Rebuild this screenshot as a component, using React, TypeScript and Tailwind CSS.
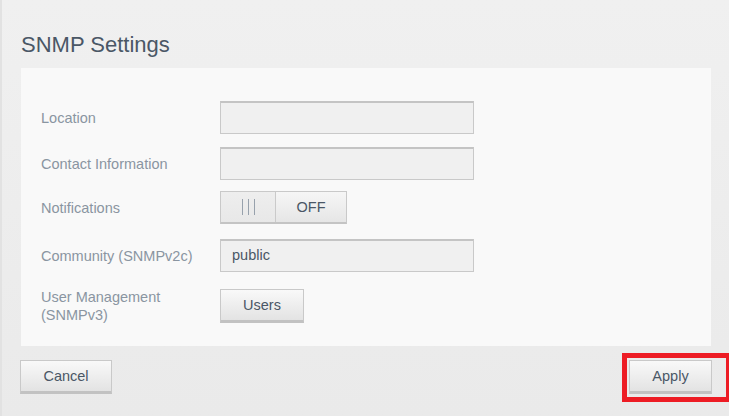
import React from "react";

const font = { fontFamily: '"Liberation Sans", Arial, sans-serif' };

function Field({ value = "" }: { value?: string }) {
  return (
    <div className="w-[254px] h-[33px] bg-[#f0f0f0] border border-[#c9c9c9] border-t-2 border-t-[#c4c4c4] flex items-center pl-[11px] text-[14.5px] text-[#4a5766]">
      {value}
    </div>
  );
}

function Btn({ children, w }: { children: React.ReactNode; w: string }) {
  return (
    <button
      className={`${w} h-[34px] pt-[2px] bg-gradient-to-b from-[#f9f9f9] to-[#e3e3e3] border border-[#c9c9c9] border-b-[3px] border-b-[#c2c2c2] text-[14.5px] text-[#4a5766] flex items-center justify-center`}
    >
      {children}
    </button>
  );
}

function Row({ label, children, className = "" }: { label: string; children: React.ReactNode; className?: string }) {
  return (
    <div className={`flex items-center ${className}`}>
      <div className="w-[179px] pr-[20px] text-[14.5px] leading-[18px] text-[#8a95a1]">{label}</div>
      {children}
    </div>
  );
}

export default function App() {
  return (
    <div
      className="w-[729px] h-[416px] bg-gradient-to-b from-[#f0f0f0] to-[#eaeaea] border-l-2 border-[#e2e2e2] relative overflow-hidden"
      style={font}
    >
      <div className="pl-[19px] pr-[18px]">
        <h1 className="pt-[32px] text-[22px] leading-[26px] text-[#4a5766] font-normal">SNMP Settings</h1>

        <div className="mt-[10px] h-[278px] bg-[#f9f9f9] pt-[33px] pl-[20px]">
          <Row label="Location">
            <Field />
          </Row>
          <Row label="Contact Information" className="mt-[13px]">
            <Field />
          </Row>
          <Row label="Notifications" className="mt-[11px]">
            <div className="flex h-[33px] border border-[#c9c9c9] border-b-2 border-b-[#c4c4c4]">
              <div className="w-[55px] bg-gradient-to-b from-[#eeeeee] to-[#e8e8e8] border-r border-[#cacaca] flex items-center justify-center gap-[5px]">
                <span className="w-px h-[16px] bg-[#97a1ac]" />
                <span className="w-px h-[16px] bg-[#97a1ac]" />
                <span className="w-px h-[16px] bg-[#97a1ac]" />
              </div>
              <div className="w-[70px] pt-px bg-gradient-to-b from-[#f6f6f6] to-[#e6e6e6] flex items-center justify-center text-[14.5px] text-[#4a5766]">
                OFF
              </div>
            </div>
          </Row>
          <Row label="Community (SNMPv2c)" className="mt-[15px]">
            <Field value="public" />
          </Row>
          <Row label="User Management (SNMPv3)" className="mt-[16px]">
            <Btn w="w-[84px]">Users</Btn>
          </Row>
        </div>

        <div className="mt-[14px] flex justify-between -ml-px -mr-px">
          <Btn w="w-[92px]">Cancel</Btn>
          <Btn w="w-[83px]">Apply</Btn>
        </div>
      </div>

      <div className="absolute left-[620px] top-[353px] w-[109px] h-[49px] border-[5px] border-[#ed1c24]" />
    </div>
  );
}
